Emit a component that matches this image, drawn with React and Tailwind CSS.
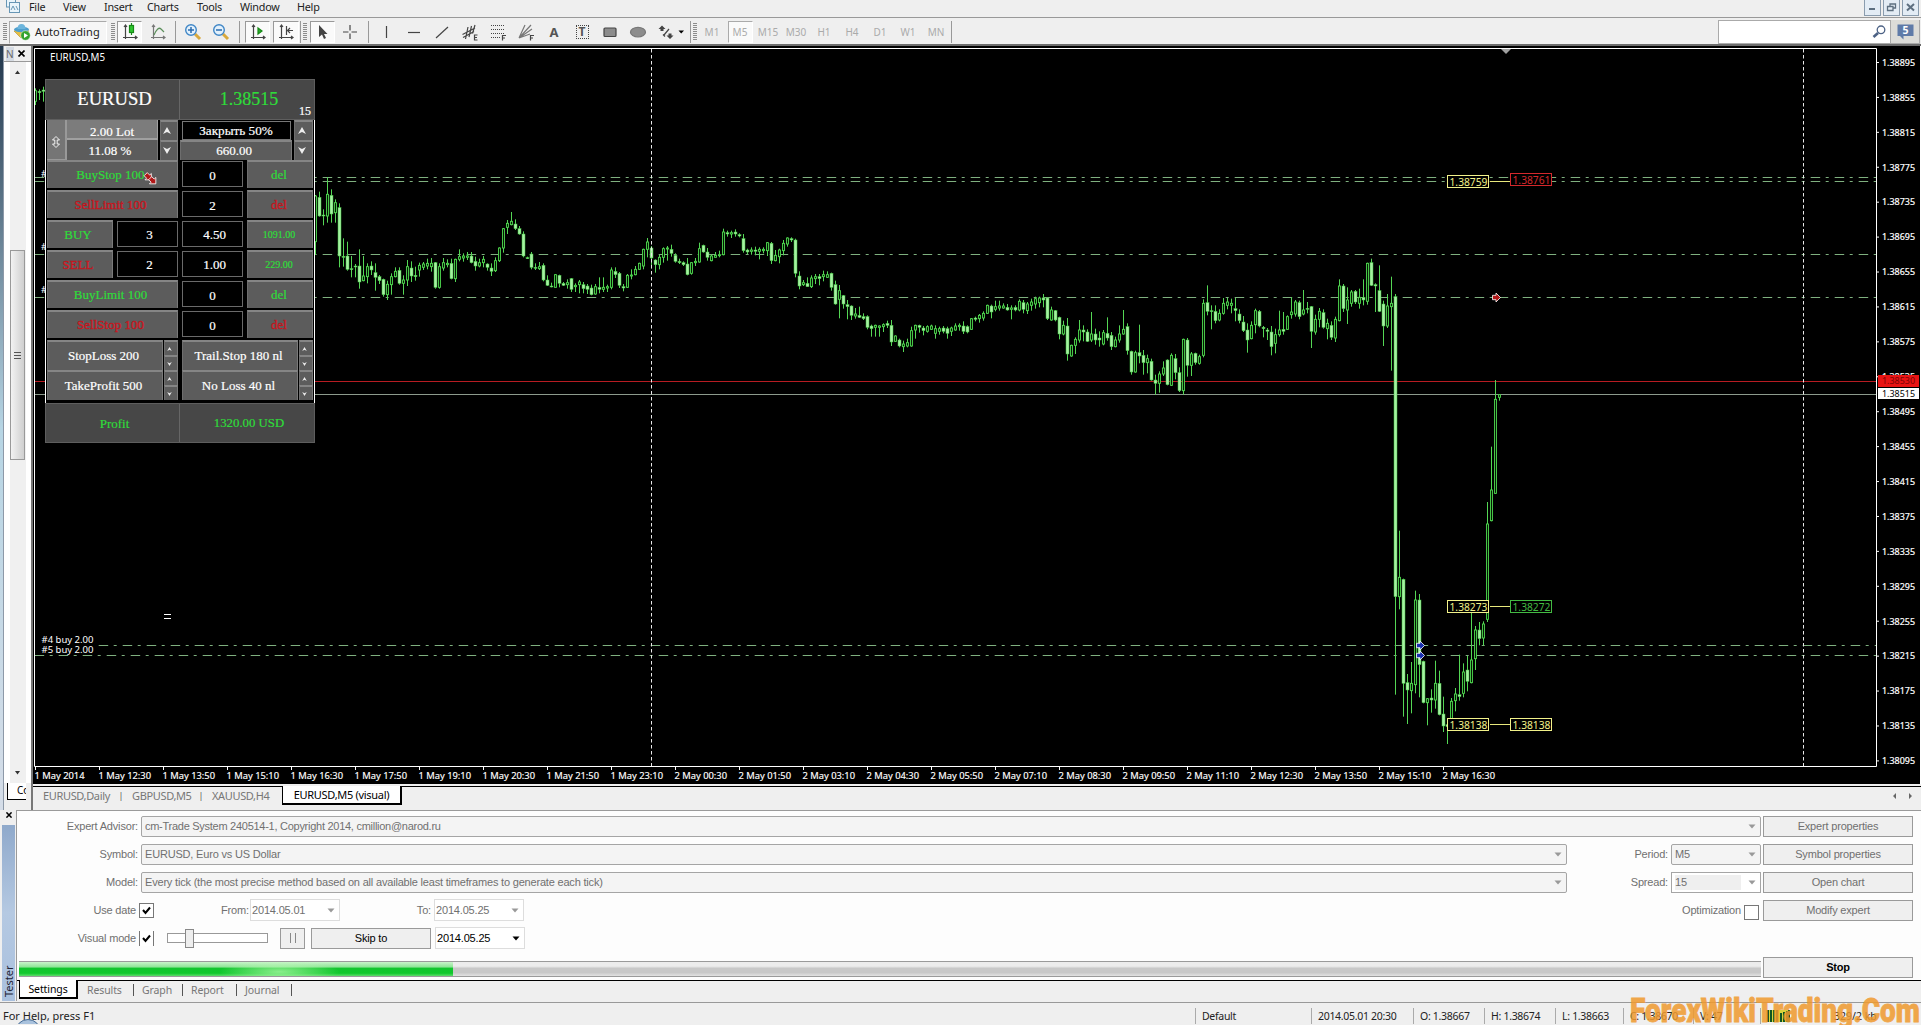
import clsx from 'clsx';

// Each bar is [high, body top, body bottom, low, solid], in thirds of a pixel below `top`.
// Bars are 4px apart, `x` is the first one.
const SEGMENTS = [
  {
    x: 315.5,
    top: 160,
    bars: [
      [105,108,245,285,0],[95,112,168,170,1],[148,165,168,196,1],[52,103,168,188,0],[88,106,162,188,1],
      [118,128,158,188,0],[130,143,288,322,1],[235,289,292,320,1],[245,288,328,332,1],[288,326,328,352,1],
      [312,318,320,352,1],[268,318,366,386,1],[288,348,362,364,0],[310,320,350,370,0],[304,318,330,345,1],
      [310,338,352,392,1],[345,350,362,372,1],[356,358,404,410,1],[362,373,404,420,0],[340,350,374,404,0],
      [322,334,350,352,0],[322,331,370,374,1],[346,360,370,404,0],[300,320,360,378,0],[304,324,348,366,1],
      [320,346,350,362,1],[308,316,330,350,0],[306,312,322,330,0],[296,310,318,328,0],[294,310,320,335,0],
      [306,308,382,386,1],[310,320,382,386,0],[294,308,324,332,0],[298,310,314,322,0],[296,310,356,358,1],
      [296,298,356,366,0],[268,290,298,304,0],[280,288,294,305,0],[276,288,292,300,0],[276,288,308,310,1],
      [290,304,318,332,1],[296,308,318,322,0],[288,298,308,322,0],[310,312,322,332,1],[310,324,334,348,1],
      [292,302,332,336,0],[262,264,302,306,0],[204,206,264,278,0],[180,190,202,222,0],[156,184,194,196,0],
      [178,192,206,210,1],[198,206,222,224,1],[214,222,288,292,1],[290,293,295,297,1],[276,282,322,328,1],
      [310,322,324,330,1],[306,320,326,330,0],[310,316,360,364,1],[346,360,376,378,1],[368,378,380,382,1],
      [342,344,382,382,0],[344,346,370,382,1],[366,370,376,378,1],[358,368,374,386,0],[354,356,388,396,1],
      [370,376,380,396,0],[360,366,374,400,0],[366,374,386,400,1],[372,378,388,402,1],[374,384,404,406,1],
      [372,380,402,404,0],[352,382,388,400,1],[352,382,388,396,0],[374,380,384,396,0],[322,330,382,388,0],
      [322,334,344,354,1],[336,340,376,384,1],[372,380,384,394,1],[342,346,382,384,0],[328,345,348,358,0],
      [318,328,344,346,0],[308,310,328,330,0],[266,268,318,328,0],[234,246,268,292,0],[258,264,294,325,1],
      [298,300,314,338,1],[284,292,314,328,0],[262,266,292,308,0],[258,264,266,302,0],[254,268,280,290,1],
      [280,286,304,308,1],[296,304,308,312,1],[304,308,314,318,1],[294,312,344,346,1],[306,308,340,344,0],
      [294,304,308,318,0],[248,266,306,308,0],[254,256,276,278,1],[264,276,292,302,1],[284,288,302,304,0],
      [276,286,292,292,0],[272,284,286,292,0],[206,216,284,286,0],[212,218,222,230,1],[212,218,222,234,0],
      [208,216,222,230,1],[220,224,228,232,1],[222,236,272,278,1],[266,270,276,282,1],[262,270,274,284,0],
      [260,270,274,286,1],[262,268,274,298,0],[262,268,272,280,0],[246,248,272,288,0],[246,250,302,312,1],
      [270,286,302,304,0],[266,270,290,310,0],[240,250,272,286,0],[232,234,252,260,0],[232,236,240,246,1],
      [236,240,340,352,1],[334,348,378,388,1],[360,368,374,378,0],[352,370,380,380,1],[346,354,380,384,0],
      [342,350,356,372,0],[342,350,356,376,1],[332,344,350,364,0],[334,344,352,354,0],[338,340,382,392,1],
      [362,374,432,434,1],
    ],
  },
  {
    x: 839.5,
    top: 200,
    bars: [
      [255,272,298,355,0],[285,287,312,326,1],[300,314,320,358,1],[316,318,346,360,1],[324,342,348,356,0],
      [320,346,352,354,1],[340,350,356,360,1],[346,350,382,388,1],[374,378,386,410,1],[374,376,382,410,0],
      [376,378,382,410,0],[370,374,380,396,0],[362,370,376,384,1],[360,376,426,438,1],[406,408,424,426,0],
      [416,420,438,442,1],[422,432,440,456,0],[416,428,438,442,0],[380,392,438,440,0],[374,376,390,416,0],
      [374,376,382,398,1],[378,384,392,406,1],[376,380,394,398,0],[374,378,388,390,0],[376,386,400,416,0],
      [380,386,394,404,0],[378,384,394,400,1],[380,386,400,416,1],[380,384,394,408,0],[370,378,390,392,0],
      [370,376,380,392,0],[364,378,394,402,1],[376,380,396,400,1],[354,356,388,390,0],[350,354,358,364,1],
      [342,346,356,368,0],[334,340,354,362,0],[314,316,340,342,0],[314,318,336,355,1],[302,320,328,334,0],
      [302,318,324,332,0],[310,318,324,326,0],[312,322,330,332,1],[316,324,328,358,0],[316,322,330,334,1],
      [298,304,330,334,0],[300,308,328,340,1],[306,312,332,342,0],[296,306,316,332,0],[290,296,312,326,0],
      [290,294,308,322,0],[282,294,300,322,1],[292,294,356,360,1],[320,330,360,362,0],[330,332,360,364,1],
      [350,352,402,418,1],[362,376,402,406,0],[354,378,462,482,1],[434,436,468,470,0],[412,418,436,462,0],
      [360,390,420,428,0],[376,390,396,424,1],[388,396,424,426,1],[336,402,420,426,0],[386,402,420,434,1],
      [394,414,420,440,1],[390,398,432,436,0],[352,400,414,422,1],[396,406,440,450,1],[410,420,440,442,0],
      [376,402,420,428,0],[330,388,402,404,0],[370,380,452,464,1],[452,454,516,524,1],[452,458,516,518,0],
      [374,458,468,490,1],[450,466,488,524,1],[464,476,488,520,0],[476,484,540,542,1],[524,540,550,584,1],
      [514,522,550,578,0],[484,504,522,528,0],[478,480,554,556,1],[460,466,556,558,0],[462,476,518,538,1],
      [502,518,572,576,1],[416,418,572,584,0],[414,420,496,530,1],[456,462,496,528,0],[458,460,488,494,1],
      [464,470,490,494,0],[298,310,466,472,0],[256,308,334,346,1],[316,332,334,388,1],[316,334,362,370,1],
      [328,340,360,364,0],[294,310,340,344,0],[294,306,316,328,0],[296,310,316,340,0],[294,326,332,364,1],
      [328,342,362,370,1],[348,366,392,396,1],[370,390,420,458,1],[364,376,416,418,0],[326,332,374,400,0],
      [330,334,378,382,1],[378,382,386,412,1],[384,390,394,420,1],[378,396,440,466,1],[386,404,430,460,0],
      [332,390,404,410,0],[336,388,394,404,1],[346,350,388,390,0],[292,336,344,356,0],[300,306,342,350,0],
      [302,308,350,358,1],[270,330,342,346,0],[306,325,328,340,1],[318,320,394,444,1],[344,358,396,404,0],
      [324,334,358,382,0],[328,338,382,386,1],[356,370,386,418,0],[364,376,412,420,1],[350,358,414,426,0],
      [238,258,362,364,0],[252,258,326,336,1],[262,300,330,372,0],[270,276,310,320,0],[270,274,306,312,1],
      [266,292,310,326,0],[238,292,300,316,1],[188,190,304,314,0],[176,188,256,258,1],[250,254,258,336,1],
    ],
  },
  {
    x: 1379.5,
    top: 240,
    bars: [
      [76,152,214,216,1],[182,192,258,318,1],[162,198,258,264,0],[110,190,200,392,0],[162,170,1070,1364,1],
      [872,1012,1070,1108,0],[1016,1018,1330,1430,1],[1302,1328,1350,1452,1],[1266,1330,1352,1420,0],
      [1052,1080,1334,1360,0],[1062,1080,1274,1372,1],[1262,1264,1388,1390,1],[1374,1376,1388,1456,0],
      [1348,1374,1380,1418,1],[1262,1330,1380,1406,0],[1292,1330,1424,1426,1],[1370,1422,1458,1476,1],
      [1440,1454,1460,1512,1],[1374,1384,1458,1460,0],[1344,1362,1382,1414,0],[1244,1364,1370,1382,1],
      [1270,1296,1360,1372,0],[1248,1290,1324,1354,1],[1100,1260,1328,1330,0],[1158,1170,1256,1290,0],
      [1146,1170,1196,1216,1],[1144,1152,1194,1216,0],[786,852,1138,1146,0],[620,750,842,844,0],
      [420,478,760,762,0],[462,464,472,482,0],
    ],
  },
  {
    x: 35.5,
    top: 80,
    bars: [[25,32,64,75,0],[28,34,38,60,1],[20,30,34,65,1]],
  },
];

const TIMES = [
  '1 May 2014', '1 May 12:30', '1 May 13:50', '1 May 15:10', '1 May 16:30', '1 May 17:50',
  '1 May 19:10', '1 May 20:30', '1 May 21:50', '1 May 23:10', '2 May 00:30', '2 May 01:50',
  '2 May 03:10', '2 May 04:30', '2 May 05:50', '2 May 07:10', '2 May 08:30', '2 May 09:50',
  '2 May 11:10', '2 May 12:30', '2 May 13:50', '2 May 15:10', '2 May 16:30',
];

const PRICES = Array.from({ length: 21 }, (_, i) => (1.38895 - i * 0.0004).toFixed(5));

const MENUS = [
  ['File', 'w-[34px]'],
  ['View', 'w-[41px]'],
  ['Insert', 'w-[43px]'],
  ['Charts', 'w-[50px]'],
  ['Tools', 'w-[43px]'],
  ['Window', 'w-[57px]'],
  ['Help', 'w-[40px]'],
];

/* ---------- chart ---------- */

function Candles() {
  return SEGMENTS.map((seg) =>
    seg.bars.map(([high, open, close, low, solid], i) => {
      const x = seg.x + i * 4;
      const y = (v) => seg.top + v / 3;
      const height = Math.max((close - open) / 3, 1);
      return (
        <g key={`${seg.x}-${i}`}>
          <line x1={x} x2={x} y1={y(high)} y2={y(low)} stroke="#54d654" />
          {solid ? (
            <rect x={x - 1.5} y={y(open)} width="3" height={height} fill="#a6f0a2" stroke="#3fc43f" strokeWidth="0.5" />
          ) : (
            <rect x={x - 1} y={y(open)} width="2" height={height} fill="#041a04" stroke="#4fd94f" strokeWidth="0.9" />
          )}
        </g>
      );
    })
  );
}

function PriceTag({ x, y, color, children }) {
  return (
    <g>
      <rect x={x + 0.5} y={y + 0.5} width="41" height="12" fill="black" stroke={color} />
      <text x={x + 2.5} y={y + 10.5} fontSize="11" fill={color} textLength="38" lengthAdjust="spacingAndGlyphs">
        {children}
      </text>
    </g>
  );
}

function Arrow({ x, y, color, rotate = 0 }) {
  return (
    <path
      d="M-4,-2.2 H-0.5 V-4.5 L4,0 L-0.5,4.5 V2.2 H-4 Z"
      transform={`translate(${x} ${y}) rotate(${rotate})`}
      fill={color}
      stroke="white"
      strokeWidth="0.8"
    />
  );
}

function LevelLine({ y, x1 = 34.7 }) {
  return <line x1={x1} x2="1876" y1={y} y2={y} stroke="#7fb07f" strokeDasharray="9.5 5.5 3 6" />;
}

function Chart() {
  return (
    <svg
      width="1887"
      height="738"
      viewBox="33 46 1887 738"
      className="block bg-black"
      fontFamily='"Noto Sans", sans-serif'
    >
      <LevelLine y={177.5} />
      <LevelLine y={181.5} />
      <LevelLine y={254.5} />
      <LevelLine y={297.5} />
      <LevelLine y={645.5} x1={98.7} />
      <LevelLine y={655.5} />
      <line x1="34" x2="1876" y1="381.5" y2="381.5" stroke="#b81c22" />
      <line x1="34" x2="1876" y1="394.5" y2="394.5" stroke="#8c9a8c" />

      <Candles />

      {[651.5, 1803.5].map((x) => (
        <line key={x} x1={x} x2={x} y1="49" y2="766" stroke="#e8e8e8" strokeDasharray="3.5 2.5" />
      ))}

      {/* frame */}
      <path d="M34.5,766.5 V48.5 H1876.5 V766.5 Z" fill="none" stroke="white" />
      <path d="M1501,49 H1511 L1506,54 Z" fill="#a0a0a0" />

      <text x="50" y="60.5" fontSize="10.5" fill="white" textLength="55" lengthAdjust="spacingAndGlyphs">EURUSD,M5</text>
      <text x="41.5" y="643" fontSize="9.5" fill="white" textLength="52" lengthAdjust="spacingAndGlyphs">#4 buy 2.00</text>
      <text x="41.5" y="653" fontSize="9.5" fill="white" textLength="52" lengthAdjust="spacingAndGlyphs">#5 buy 2.00</text>
      {[177, 250, 293].map((y) => (
        <text key={y} x="41" y={y} fontSize="9.5" fill="white">#</text>
      ))}
      <path d="M164,614.5 H171 M164,618.5 H171" stroke="white" />

      {/* price scale */}
      {PRICES.map((price, i) => {
        const y = 62.5 + i * 34.92;
        return (
          <g key={price}>
            <line x1="1877" x2="1879" y1={y} y2={y} stroke="white" />
            <text x="1882" y={y + 3.3} fontSize="9" fill="white" stroke="white" strokeWidth="0.2" textLength="33" lengthAdjust="spacingAndGlyphs">
              {price}
            </text>
          </g>
        );
      })}
      <rect x="1878" y="375" width="41" height="12" fill="#e81414" />
      <text x="1882" y="384.3" fontSize="9" fill="#7a0505" textLength="33" lengthAdjust="spacingAndGlyphs">1.38530</text>
      <rect x="1878" y="388" width="41" height="11" fill="white" />
      <text x="1882" y="397" fontSize="9" fill="black" textLength="33" lengthAdjust="spacingAndGlyphs">1.38515</text>

      {/* time scale */}
      {TIMES.map((time, i) => (
        <g key={time}>
          <line x1={35.5 + i * 64} x2={35.5 + i * 64} y1="767" y2="770" stroke="white" />
          <text
            x={34.5 + i * 64}
            y="779.3"
            fontSize="9.5"
            fill="white"
            stroke="white"
            strokeWidth="0.15"
            textLength={i ? 52.5 : 50}
            lengthAdjust="spacingAndGlyphs"
          >
            {time}
          </text>
        </g>
      ))}

      <path d="M1490,606.5 H1510 M1490,724.5 H1510 M1490,181.5 H1510" stroke="#e8e87c" />
      <PriceTag x={1447} y={175} color="#f2f28a">1.38759</PriceTag>
      <PriceTag x={1510} y={173} color="#d4282c">1.38761</PriceTag>
      <PriceTag x={1447} y={600} color="#f2f28a">1.38273</PriceTag>
      <PriceTag x={1510} y={600} color="#43bb43">1.38272</PriceTag>
      <PriceTag x={1447} y={718} color="#f2f28a">1.38138</PriceTag>
      <PriceTag x={1510} y={718} color="#f2f28a">1.38138</PriceTag>

      <Arrow x={1496.5} y={297.5} color="#b01818" />
      <Arrow x={1420.5} y={645.5} color="#1a2fb0" />
      <Arrow x={1420.5} y={655.5} color="#1a2fb0" />
    </svg>
  );
}

/* ---------- trade panel over the chart ---------- */

const RAISED = 'flex items-center justify-center bg-[#5c5c5c] border-t-2 border-t-[#858585] border-l border-l-[#6e6e6e] border-r border-r-[#7a7a7a]';
const GREEN = 'text-[#2fdc3a]';
const RED = 'text-[#e0202a] [-webkit-text-stroke:0.4px_#b8141c]';

function Raised({ className, children }) {
  return <div className={clsx(RAISED, className)}>{children}</div>;
}

function Field({ className, children }) {
  return (
    <div className={clsx('flex h-[26px] items-center justify-center border border-[#6a6a6a] bg-black text-white', className)}>
      {children}
    </div>
  );
}

function ArrowHead({ down, small }) {
  return (
    <svg width={small ? 5 : 8} height={small ? 4 : 7} viewBox="0 0 8 7">
      <path d={down ? 'M0,0 L4,7 L8,0 L4,2 Z' : 'M0,7 L4,0 L8,7 L4,5 Z'} fill="#eee" />
    </svg>
  );
}

function OrderRow({ label, count, color }) {
  return (
    <div className="flex h-[30px] items-start">
      <Raised className={clsx('h-7 w-[131px] pr-7 pb-[2px] pl-6 whitespace-nowrap', color)}>{label}</Raised>
      <Field className="mt-px ml-1 w-[61px] pt-[3px]">{count}</Field>
      <Raised className={clsx('ml-1 h-7 w-[66px] pr-[2px] pb-[2px]', color)}>del</Raised>
    </div>
  );
}

function SideRow({ label, count, lots, profit, color }) {
  return (
    <div className="flex h-[30px] items-start">
      <Raised className={clsx('h-7 w-[66px] pr-1 pb-px', color)}>{label}</Raised>
      <Field className="mt-px ml-1 w-[61px] pl-1">{count}</Field>
      <Field className="mt-px ml-1 w-[61px] pl-1">{lots}</Field>
      <Raised className={clsx('ml-1 h-7 w-[66px] pr-[2px] text-[10px]', GREEN)}>{profit}</Raised>
    </div>
  );
}

function StopSetting({ children }) {
  return (
    <div className="flex h-[30px] w-[131px]">
      <Raised className="w-[116px] pr-[3px] pb-[2px] whitespace-nowrap text-white">{children}</Raised>
      <div className="ml-px flex w-[14px] flex-col">
        <Raised className="h-[15px] pr-[3px]"><ArrowHead small /></Raised>
        <Raised className="h-[15px] pr-[3px]"><ArrowHead small down /></Raised>
      </div>
    </div>
  );
}

function TradePanel() {
  return (
    <div className="absolute top-[79px] left-[45px] w-[270px] font-['Liberation_Serif',serif] text-[13px] leading-none [-webkit-text-stroke:0.2px]">
      <div className="flex h-[41px] border border-[#5e5e5e] bg-[#474747]">
        <div className="flex w-[134px] items-center justify-center border-r border-[#666] pb-px pl-1 text-[18.6px] text-white">EURUSD</div>
        <div className={clsx('relative flex flex-1 items-center justify-center pb-px pl-1 text-[18px]', GREEN)}>
          1.38515
          <span className="absolute right-[3px] bottom-[2px] text-[12px] text-white">15</span>
        </div>
      </div>

      <div className="border-x border-white bg-black px-px">
        <div className="flex h-10">
          <div className="flex w-5 items-center justify-center border-r-2 border-b border-[#999] bg-[#757575] pt-1">
            <svg width="8" height="12" viewBox="0 0 8 12" fill="none" stroke="white" strokeWidth="0.9">
              <path d="M4,0.5 L7.5,4 H5.2 V8 H7.5 L4,11.5 L0.5,8 H2.8 V4 H0.5 Z" />
            </svg>
          </div>
          <div className="flex w-[91px] flex-col text-white">
            <div className="flex h-5 items-center justify-center border-r border-b-2 border-[#a0a0a0] bg-[#7c7c7c] pt-1">2.00 Lot</div>
            <div className="flex h-5 items-center justify-center border-r border-[#777] bg-[#5c5c5c] pr-1">11.08 %</div>
          </div>
          <div className="ml-[2px] flex w-[18px] flex-col">
            <Raised className="h-5 pr-1 pb-[2px]"><ArrowHead /></Raised>
            <Raised className="h-5 pr-1 pb-[2px]"><ArrowHead down /></Raised>
          </div>
          <div className="ml-[2px] flex w-[112px] flex-col text-white">
            <div className="mt-px mr-px ml-[2px] flex h-[19px] items-center justify-center border border-[#777] bg-black pr-px text-[13.2px]">Закрыть 50%</div>
            <Raised className="h-5 pr-1 pb-[2px]">660.00</Raised>
          </div>
          <div className="ml-[2px] flex w-[19px] flex-col">
            <Raised className="h-5 pr-1 pb-[2px]"><ArrowHead /></Raised>
            <Raised className="h-5 pr-1 pb-[2px]"><ArrowHead down /></Raised>
          </div>
        </div>

        <OrderRow label="BuyStop 100" count="0" color={GREEN} />
        <OrderRow label="SellLimit 100" count="2" color={RED} />
        <SideRow label="BUY" count="3" lots="4.50" profit="1091.00" color={GREEN} />
        <SideRow label="SELL" count="2" lots="1.00" profit="229.00" color={RED} />
        <OrderRow label="BuyLimit 100" count="0" color={GREEN} />
        <OrderRow label="SellStop 100" count="0" color={RED} />

        <div className="flex gap-1 pb-[3px]">
          <div>
            <StopSetting>StopLoss 200</StopSetting>
            <StopSetting>TakeProfit 500</StopSetting>
          </div>
          <div>
            <StopSetting>Trail.Stop 180 nl</StopSetting>
            <StopSetting>No Loss 40 nl</StopSetting>
          </div>
        </div>
      </div>

      <div className={clsx('flex h-10 border border-[#5e5e5e] bg-[#474747]', GREEN)}>
        <div className="flex w-[134px] items-center justify-center border-r border-[#666] pl-1">Profit</div>
        <div className="flex flex-1 items-center justify-center pl-1 text-[12.8px]">1320.00 USD</div>
      </div>

      <svg className="absolute top-[92px] left-[97px]" width="18" height="16" viewBox="-9 -8 18 16">
        <Arrow x={-2.5} y={-2} color="#b01818" rotate={45} />
        <Arrow x={2} y={2} color="#b01818" rotate={45} />
      </svg>
    </div>
  );
}

/* ---------- menu and toolbar ---------- */

function WinButton({ children }) {
  return (
    <div className="flex h-4 w-[17px] items-center justify-center border border-t-0 border-[#8a9cae] bg-[#e3ecf5]">
      <svg width="11" height="11" viewBox="0 0 11 11" fill="none" stroke="#5d6f80">{children}</svg>
    </div>
  );
}

function MenuBar() {
  return (
    <div className="flex h-[18px] items-start border-b border-[#999] pl-[6px] text-[10.8px] leading-[14px] text-[#222]">
      <svg className="mr-2" width="15" height="14" viewBox="0 0 15 14" fill="#e8f4fb" stroke="#6796b5">
        <rect x="0.5" y="-3" width="9" height="10" />
        <rect x="3.5" y="2.5" width="10" height="10" />
        <path d="M5,10 L7,6 L9,10 M10,6 L12,10" fill="none" />
      </svg>
      {MENUS.map(([name, width]) => (
        <span key={name} className={clsx('tracking-[-0.25px]', width)}>{name}</span>
      ))}
      <div className="ml-auto flex gap-[2px] pr-[2px]">
        <WinButton><path d="M2,7 H8" strokeWidth="2" /></WinButton>
        <WinButton><path d="M4,4 V2 H9.5 V6 H7.5 M1.5,4.5 H7 V8.5 H1.5 Z" strokeWidth="1.3" /></WinButton>
        <WinButton><path d="M2,2 L9,8.5 M9,2 L2,8.5" strokeWidth="2" /></WinButton>
      </div>
    </div>
  );
}

function Handle({ className }) {
  return (
    <div className={clsx('h-[18px] w-1 shrink-0 bg-[repeating-linear-gradient(#8c8c8c_0_1px,#f0f0f0_1px_2px)]', className)} />
  );
}

function Sep({ className }) {
  return <div className={clsx('h-[22px] w-px shrink-0 bg-[#999]', className)} />;
}

function Tool({ className, pressed, children }) {
  return (
    <div
      className={clsx(
        'flex h-[22px] shrink-0 items-center justify-center',
        pressed && 'border border-[#999] border-r-white border-b-white bg-[#fafafa]',
        className
      )}
    >
      <svg width="18" height="18" viewBox="0 0 18 18" fill="none" stroke="#444" strokeWidth="1.2">{children}</svg>
    </div>
  );
}

function Magnifier({ plus }) {
  return (
    <>
      <path d="M11,11 L16,16" stroke="#d9a93c" strokeWidth="3" />
      <circle cx="7" cy="7" r="5.3" fill="#e3f1fc" stroke="#3f86c6" strokeWidth="1.4" />
      <path d={plus ? 'M4,7 H10 M7,4 V10' : 'M4,7 H10'} stroke="#2b6cb0" strokeWidth="1.5" />
    </>
  );
}

const AXES = 'M4.5,2.5 V16 M2,14.5 H16 M3,4 L4.5,2 L6,4 M14,13 L16,14.5 L14,16';

function Toolbar() {
  return (
    <div className="flex h-[28px] items-center border-b-2 border-[#6c6c6c] pt-[2px] pl-[3px] text-[#aaa]">
      <Handle />
      <div className="ml-[2px] flex h-[23px] w-[98px] items-center border border-[#aaa] border-r-white border-b-white bg-[#f6f6f6] pl-[3px] text-[11px] text-[#222]">
        <svg width="18" height="18" viewBox="0 0 18 18" className="mr-1">
          <path d="M1,8 L8,15 L16,8 L8,6 Z" fill="#e6bf45" stroke="#b38d22" strokeWidth="0.6" />
          <ellipse cx="8.5" cy="6.5" rx="7.5" ry="2.8" fill="#4f9fcd" />
          <path d="M4.5,6 Q4.5,1 8.5,1 Q12.5,1 12.5,6 Z" fill="#6db5dc" />
          <circle cx="12.5" cy="12.5" r="4.8" fill="#35a32c" stroke="#fff" strokeWidth="0.5" />
          <path d="M11,10 L15,12.5 L11,15 Z" fill="white" />
        </svg>
        <span className="tracking-[0.1px]">AutoTrading</span>
      </div>
      <Handle className="ml-1" />
      <Tool pressed className="ml-[2px] w-[25px]">
        <path d={AXES} />
        <path d="M10.5,0 V12" stroke="#178a17" />
        <rect x="8.5" y="2.5" width="4" height="7" fill="#2fc52f" stroke="#178a17" />
      </Tool>
      <Tool className="w-8"><path d={AXES} stroke="#777" /><path d="M5,12 Q9,3 12,6 L15,9" stroke="#5c8f5c" /></Tool>
      <Sep className="ml-px" />
      <Tool className="w-[30px] pl-[3px]"><Magnifier plus /></Tool>
      <Tool className="w-[30px]"><Magnifier /></Tool>
      <Sep className="ml-[3px]" />
      <Tool pressed className="ml-[5px] w-[25px]"><path d={AXES} /><path d="M9,5 L13,8 L9,11 Z" fill="#2fae2f" stroke="#178a17" /></Tool>
      <Tool pressed className="ml-[3px] w-[26px]"><path d={AXES} /><path d="M9.5,3 V12 M16,7.5 H11 M13,5 L10.5,7.5 L13,10" /></Tool>
      <Sep className="ml-px" />
      <Handle className="ml-[2px]" />
      <Tool pressed className="ml-[3px] w-[25px]">
        <path d="M5,2 V14 L8,11.5 L10,16 L12,15 L10,11 H13.5 Z" fill="#444" stroke="none" />
      </Tool>
      <Tool className="w-[30px]"><path d="M9,2 V7.5 M9,10.5 V16 M2,9 H7.5 M10.5,9 H16" /></Tool>
      <Sep className="ml-[3px]" />
      <Tool className="ml-[3px] w-7"><path d="M9.5,3 V15" /></Tool>
      <Tool className="w-7"><path d="M3,9.5 H15" /></Tool>
      <Tool className="w-7"><path d="M3,15 L15,4" /></Tool>
      <Tool className="w-7">
        <path d="M1.5,11.5 L14,5 M2,14.5 L13,8.5 M4.5,16 L7,4 M8,14 L10.5,3 M11.5,10.5 L14,2" />
        <path d="M16.5,12 H13.5 V17 H16.5 M13.5,14.5 H16" />
      </Tool>
      <Tool className="w-7">
        <path d="M2,2.5 H16 M2,6.5 H16 M2,10.5 H16 M2,14.5 H11" strokeDasharray="1 1" />
        <path d="M13.5,17.5 V12.5 H17 M13.5,15 H16" />
      </Tool>
      <Tool className="w-7">
        <path d="M2,15 L14,2 M2,15 L15,6 M2,15 L8,2 M2,15 L13,11" stroke="#777" />
        <path d="M13.5,17.5 V12.5 H17 M13.5,15 H16" />
      </Tool>
      <div className="w-7 text-center text-[13px] leading-[18px] font-bold text-[#555]">A</div>
      <div className="flex w-7 justify-center">
        <span className="h-[14px] w-[13px] border border-dotted border-[#444] text-center text-[12px] leading-[12px] font-bold text-[#555]">T</span>
      </div>
      <Tool className="w-7"><rect x="3" y="5" width="12" height="8.5" rx="1" fill="#8c8c8c" /></Tool>
      <Tool className="w-7"><ellipse cx="9" cy="9.2" rx="7.5" ry="4.8" fill="#8c8c8c" stroke="#777" /></Tool>
      <Tool className="w-7">
        <path d="M5,2.5 L8.5,6 H6.5 V8 H3.5 V6 H1.5 Z M13,16 L9.5,12.5 H11.5 V10.5 H14.5 V12.5 H16.5 Z" fill="#444" stroke="none" />
        <path d="M6,11.5 L8,13.5 M7,12 L12,6" />
      </Tool>
      <svg width="8" height="5" viewBox="0 0 8 5" className="-ml-[3px]"><path d="M1.5,0.5 H7 L4.2,3.5 Z" fill="black" /></svg>
      <Sep className="ml-[5px]" />
      <Handle className="mr-px ml-[2px]" />
      {['M1', 'M5', 'M15', 'M30', 'H1', 'H4', 'D1', 'W1', 'MN'].map((tf) => (
        <div key={tf} className="flex w-7 justify-center text-[10px]">
          <span
            className={clsx(
              'flex h-[22px] w-[25px] items-center justify-center',
              tf === 'M5' && 'border border-[#aaa] border-r-white border-b-white bg-[#fafafa]'
            )}
          >
            {tf}
          </span>
        </div>
      ))}
      <Sep className="ml-px" />
      <div className="ml-auto flex h-6 w-[173px] items-center justify-end border border-[#aaa] bg-white pr-1">
        <svg width="14" height="14" viewBox="0 0 14 14" fill="none" stroke="#4d6285">
          <circle cx="9" cy="4.8" r="3.8" strokeWidth="1.3" />
          <path d="M6,8 L1.5,12" strokeWidth="2.6" />
        </svg>
      </div>
      <div className="mr-px flex h-6 w-[29px] items-center justify-center border-r border-b border-[#aaa] bg-[#dcdcd8]">
        <svg width="17" height="16" viewBox="0 0 17 16">
          <path d="M0.5,0.5 H16.5 V12 H6.5 V15.5 L3,12 H0.5 Z" fill="#5f7ba8" />
          <text x="8.5" y="10.2" fontSize="10.5" fontWeight="700" textAnchor="middle" fill="white">5</text>
        </svg>
      </div>
    </div>
  );
}

/* ---------- left navigator strip ---------- */

function Navigator() {
  return (
    <div className="flex h-[764px] w-[33px] border-r-2 border-[#777]">
      <div className="w-[4px] border-r border-[#8d99a8] bg-gradient-to-b from-[#23384d] via-[#b7d5e4] to-[#d5dde8]" />
      <div className="flex flex-1 flex-col">
        <div className="flex h-[15px] items-center justify-between pr-[6px] pl-[2px] text-[10px] leading-[14px] text-[#666]">
          <span className="bg-[#d5dbe3]">N</span>
          <svg width="7" height="7" viewBox="0 0 7 7" stroke="black" strokeWidth="1.6"><path d="M0.5,0.5 L6.5,6.5 M6.5,0.5 L0.5,6.5" /></svg>
        </div>
        <div className="flex flex-1 justify-center border-t border-[#999] bg-white">
          <div className="flex w-[16px] flex-col items-center bg-[#f0f0f0] py-2">
            <svg width="5" height="4" viewBox="0 0 5 4"><path d="M0,4 L2.5,0.5 L5,4 Z" fill="#333" /></svg>
            <div className="mt-[176px] flex h-[210px] w-[15px] flex-col items-center justify-center gap-px border border-[#999] bg-gradient-to-r from-[#f2f2f2] to-[#cfcfcf]">
              <i className="h-px w-[7px] bg-[#555]" />
              <i className="mt-px h-px w-[7px] bg-[#555]" />
              <i className="mt-px h-px w-[7px] bg-[#555]" />
            </div>
            <svg className="mt-auto" width="5" height="4" viewBox="0 0 5 4"><path d="M0,0 H5 L2.5,3.5 Z" fill="#333" /></svg>
          </div>
        </div>
        <div className="ml-[3px] h-[17px] w-[19px] overflow-hidden border-b border-l border-black bg-white pl-[9px] text-[10px] leading-[15px]">Co</div>
        <div className="h-[10px]" />
      </div>
    </div>
  );
}

function ChartTabs() {
  return (
    <div className="mt-[2px] flex h-[24px] border-t border-black pl-[10px] text-[11px] leading-[17px] whitespace-nowrap text-[#777]">
      <span className="w-[89px] tracking-[-0.35px]">EURUSD,Daily<span className="float-right mr-[9px] text-[9px] text-[#555]">|</span></span>
      <span className="w-[80px] tracking-[-0.35px]">GBPUSD,M5<span className="float-right mr-[9px] text-[9px] text-[#555]">|</span></span>
      <span className="w-[70px] tracking-[-0.35px]">XAUUSD,H4</span>
      <span className="-mt-px h-[19px] w-[120px] border-r-2 border-b-2 border-l border-black bg-white text-center tracking-[-0.3px] text-black">
        EURUSD,M5 (visual)
      </span>
      <svg className="mt-[5px] mr-[8px] ml-auto" width="20" height="8" viewBox="0 0 20 8" fill="#666">
        <path d="M3,1 V7 L0,4 Z M16,1 V7 L19,4 Z" />
      </svg>
    </div>
  );
}

/* ---------- strategy tester ---------- */

function Caret({ black }) {
  return (
    <svg width="8" height="5" viewBox="0 0 8 5" className="shrink-0">
      <path d="M0.5,0.5 H7.5 L4,4.5 Z" fill={black ? '#000' : '#999'} />
    </svg>
  );
}

function Combo({ className, children }) {
  return (
    <div className={clsx('flex h-[21px] items-center justify-between rounded-[2px] border border-[#a5a5a5] bg-[#f4f4f4] pr-1 pl-[3px] whitespace-nowrap', className)}>
      {children}
      <Caret />
    </div>
  );
}

function DateBox({ className, active, children }) {
  return (
    <div className={clsx('flex h-[22px] w-[90px] items-center justify-between border border-[#ddd] bg-white pr-1 pl-px', active && 'text-black', className)}>
      {children}
      <Caret black={active} />
    </div>
  );
}

function Button({ className, children }) {
  return (
    <div className={clsx('flex h-[21px] items-center justify-center border border-[#9a9a9a] bg-[#efefef]', className)}>
      {children}
    </div>
  );
}

function Checkbox({ checked, className }) {
  return (
    <div className={clsx('flex h-[15px] w-[15px] items-center justify-center border border-[#777] bg-white', className)}>
      {checked && (
        <svg width="9" height="9" viewBox="0 0 9 9" fill="none" stroke="black" strokeWidth="2"><path d="M1,4 L3.5,7 L8,1.5" /></svg>
      )}
    </div>
  );
}

function Row({ children }) {
  return <div className="flex h-7 items-center">{children}</div>;
}

function Label({ className, children }) {
  return <span className={clsx('pr-[3px] text-right whitespace-nowrap', className)}>{children}</span>;
}

function Tester() {
  return (
    <div className="flex h-[191px]">
      <div className="flex w-[16px] flex-col items-center pl-px">
        <svg className="my-[2px] mb-[7px]" width="6" height="6" viewBox="0 0 7 7" stroke="black" strokeWidth="1.8"><path d="M0.5,0.5 L6.5,6.5 M6.5,0.5 L0.5,6.5" /></svg>
        <div className="flex w-[13px] flex-1 rotate-180 items-start bg-gradient-to-b from-[#a9c0de] via-[#b5c9e2] to-[#8fa9cb] pt-1 text-[11px] leading-[13px] text-[#223] [writing-mode:vertical-rl]">
          Tester
        </div>
      </div>
      <div className="flex flex-1 flex-col border-t border-l border-[#9a9a9a]">
        <div className="flex h-[169px] flex-col bg-[#fdfdfd] pt-px font-['Liberation_Sans',sans-serif] text-[11px] tracking-[-0.18px] text-[#707070]">
          <Row>
            <Label className="w-[124px]">Expert Advisor:</Label>
            <Combo className="w-[1620px]">
              <span className="tracking-[-0.27px]">cm-Trade System 240514-1, Copyright 2014, cmillion@narod.ru</span>
            </Combo>
            <Button className="ml-[2px] w-[150px]">Expert properties</Button>
          </Row>
          <Row>
            <Label className="w-[124px]">Symbol:</Label>
            <Combo className="w-[1426px]">EURUSD, Euro vs US Dollar</Combo>
            <Label className="w-[104px]">Period:</Label>
            <Combo className="w-[90px]">M5</Combo>
            <Button className="ml-[2px] w-[150px]">Symbol properties</Button>
          </Row>
          <Row>
            <Label className="w-[124px]">Model:</Label>
            <Combo className="w-[1426px]">
              <span className="tracking-[-0.19px]">Every tick (the most precise method based on all available least timeframes to generate each tick)</span>
            </Combo>
            <Label className="w-[104px]">Spread:</Label>
            <div className="flex h-[21px] w-[90px] items-center justify-between border border-[#a5a5a5] bg-white pr-1 pl-[3px]">
              <span className="h-[15px] w-[66px] bg-[#efefef] leading-[14px]">15</span>
              <Caret />
            </div>
            <Button className="ml-[2px] w-[150px]">Open chart</Button>
          </Row>
          <Row>
            <Label className="w-[122px]">Use date</Label>
            <Checkbox checked />
            <Label className="ml-[67px] w-[29px]">From:</Label>
            <DateBox>2014.05.01</DateBox>
            <Label className="ml-[65px] w-[29px]">To:</Label>
            <DateBox>2014.05.25</DateBox>
            <Label className="ml-auto">Optimization</Label>
            <Checkbox className="mt-1" />
            <Button className="mr-[8px] ml-1 w-[150px]">Modify expert</Button>
          </Row>
          <Row>
            <Label className="w-[122px]">Visual mode</Label>
            <Checkbox checked className="border-y-0" />
            <div className="ml-[13px] flex h-[10px] w-[101px] items-center border border-[#999] bg-white">
              <span className="ml-[17px] h-[19px] w-[9px] shrink-0 border border-[#888] bg-[#eee]" />
            </div>
            <Button className="ml-3 w-[25px] gap-1">
              <i className="h-[10px] w-px bg-[#888]" />
              <i className="h-[10px] w-px bg-[#888]" />
            </Button>
            <Button className="ml-[6px] w-[120px] text-black">Skip to</Button>
            <DateBox active className="ml-[4px]">2014.05.25</DateBox>
          </Row>
          <div className="flex flex-1 items-end pb-[2px] pl-[2px]">
            <div className="mb-px flex h-[16px] w-[1742px] border-y border-[#9a9a9a] bg-[linear-gradient(#ececec_0_30%,#c8c8c8_45%_75%,#e2e2e2)]">
              <div className="w-[434px] bg-[linear-gradient(#c9f3cb_0,#8fe597_35%,#12c42e_45%,#10c82c_80%,#5fdc6c)]">
                <div className="h-full w-full bg-[radial-gradient(60px_12px_at_60%_70%,rgba(190,255,180,0.7),transparent)]" />
              </div>
            </div>
            <Button className="ml-[2px] w-[150px] font-bold text-black">Stop</Button>
          </div>
        </div>
        <div className="flex h-[21px] border-t border-black pl-[2px] text-[10.5px] leading-[18px] text-[#777]">
          <span className="-mt-px h-[19px] w-[59px] border-r-2 border-b-2 border-l border-black bg-white text-center tracking-[-0.1px] text-black">Settings</span>
          {[
            ['Results', 'w-[55px]'],
            ['Graph', 'w-[49px]'],
            ['Report', 'w-[54px]'],
            ['Journal', 'w-[55px]'],
          ].map(([name, width]) => (
            <span key={name} className={clsx('flex justify-between pl-[9px] tracking-[-0.1px]', width)}>
              {name}
              <i className="mt-[3px] mr-[-1px] h-3 w-px bg-[#555]" />
            </span>
          ))}
        </div>
      </div>
    </div>
  );
}

function StatusBar() {
  const cells = [
    ['Default', 'w-[116px]'],
    ['2014.05.01 20:30', 'w-[102px]'],
    ['O: 1.38667', 'w-[71px]'],
    ['H: 1.38674', 'w-[71px]'],
    ['L: 1.38663', 'w-[68px]'],
    ['C: 1.38670', 'w-[70px]'],
    ['V: 47', 'w-[67px]'],
  ];
  return (
    <div className="relative mt-[1px] flex h-[22px] items-center overflow-hidden border-t border-[#999] pt-1 text-[10.5px] whitespace-nowrap text-[#222]">
      <span className="w-[1195px] pl-[3px] text-[11px] leading-4">For Help, press F1</span>
      {cells.map(([text, width]) => (
        <span key={text} className={clsx('h-4 border-l border-[#aaa] pl-[6px] leading-4 tracking-[-0.3px]', width)}>{text}</span>
      ))}
      <span className="flex h-4 items-center border-l border-[#aaa] pl-[5px]">
        <svg width="24" height="12" viewBox="0 0 24 12" shapeRendering="crispEdges">
          <rect width="24" height="12" fill="#d9d43c" />
          <path d="M1.5,0 V12 M4.5,0 V12 M7.5,0 V12 M10.5,0 V12 M14.5,3 V12 M17.5,2 V12 M20.5,1 V12 M23,0 V12" stroke="#152" strokeWidth="2" />
        </svg>
      </span>
      <span className="ml-[44px] leading-4">329/2 kb</span>
      <span className="absolute top-[16px] left-[15px] h-[26px] w-[26px] rounded-full border border-[#456a94] bg-[#a9c2dd]" />
    </div>
  );
}

export default function App() {
  return (
    <div className="relative h-[1025px] w-[1921px] overflow-hidden bg-[#efefef] font-['Noto_Sans',sans-serif]">
      <MenuBar />
      <Toolbar />
      <div className="flex h-[764px]">
        <Navigator />
        <div className="flex flex-1 flex-col">
          <div className="bg-white"><Chart /></div>
          <ChartTabs />
        </div>
      </div>
      <Tester />
      <StatusBar />
      <TradePanel />
      <svg className="absolute right-0 bottom-0" width="293" height="34" viewBox="0 0 293 34">
        <text
          x="2"
          y="31"
          fontFamily="Roboto, sans-serif"
          fontWeight="900"
          fontSize="34"
          fill="#f09a2e"
          stroke="#f09a2e"
          strokeWidth="0.8"
          opacity="0.85"
          textLength="290"
          lengthAdjust="spacingAndGlyphs"
        >
          ForexWikiTrading.Com
        </text>
      </svg>
    </div>
  );
}
